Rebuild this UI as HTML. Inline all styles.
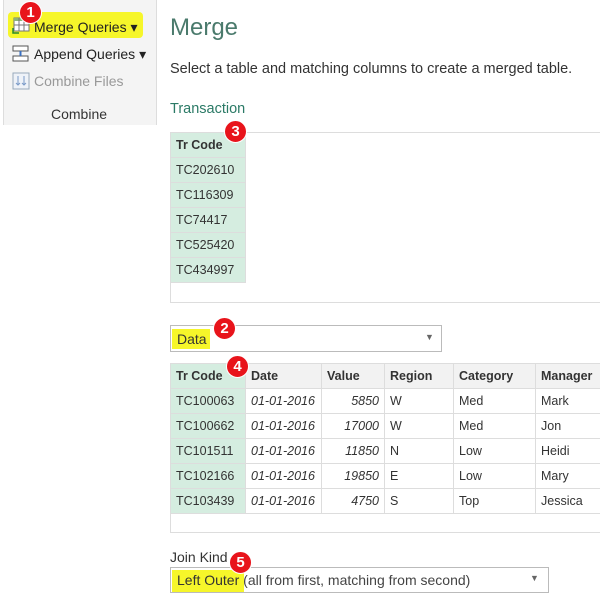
<!DOCTYPE html><html><head><style>
body{margin:0;width:600px;height:602px;background:#fff;font-family:"Liberation Sans",sans-serif;position:relative;overflow:hidden;color:#333}
.a{position:absolute}
.b{position:absolute;width:21px;height:21px;border-radius:50%;background:#e8141b;color:#fff;font-weight:bold;font-size:15px;text-align:center;line-height:21px;border:1px solid #fff}
table{border-collapse:collapse;font-size:12.5px;table-layout:fixed}
td{height:25px;border:1px solid #ddd;padding:0 5px;white-space:nowrap;overflow:hidden;box-sizing:border-box}
.g{background:#d5ede0}
.h td{font-weight:bold;background:#f2f2f2}
.h td.g{background:#d5ede0}
.i{font-style:italic}
.r{text-align:right}
.hl{background:#f6f62a}
</style></head><body>
<div class="a" style="left:3px;top:0;width:152px;height:125px;background:#f4f4f4;border-left:1px solid #ddd;border-right:1px solid #ddd"></div>
<div class="a hl" style="left:8px;top:12px;width:135px;height:26px;border-radius:4px"></div>
<svg class="a" style="left:11px;top:16px" width="20" height="20"><rect x="3" y="2" width="15" height="13" fill="#fff" stroke="#777"/><rect x="3" y="2" width="15" height="3" fill="#8bb37a"/><path d="M3 9h15M8 2v13M13 2v13" stroke="#777"/><path d="M2 12v5h6" stroke="#2a8a2a" fill="none" stroke-width="1.5"/></svg>
<div class="a" style="left:34px;top:19px;font-size:14px;color:#222">Merge Queries ▾</div>
<svg class="a" style="left:11px;top:44px" width="20" height="20"><rect x="2" y="2" width="15" height="5" fill="#fff" stroke="#555"/><rect x="2" y="12" width="15" height="5" fill="#fff" stroke="#555"/><path d="M9.5 7v5" stroke="#3a70c0" stroke-width="2"/></svg>
<div class="a" style="left:34px;top:46px;font-size:14px;color:#222">Append Queries ▾</div>
<svg class="a" style="left:11px;top:71px" width="20" height="20"><rect x="2" y="2" width="16" height="16" fill="#eef2f8" stroke="#9ab"/><path d="M7 5v9M5 12l2 2 2-2M13 5v9M11 12l2 2 2-2" stroke="#7a9ac8" fill="none"/></svg>
<div class="a" style="left:34px;top:73px;font-size:14px;color:#999">Combine Files</div>
<div class="a" style="left:51px;top:106px;font-size:14px;color:#333">Combine</div>
<div class="b" style="left:19px;top:1px">1</div>

<div class="a" style="left:170px;top:14px;font-size:24px;color:#4a7a6c">Merge</div>
<div class="a" style="left:170px;top:61px;font-size:14.5px;color:#333">Select a table and matching columns to create a merged table.</div>
<div class="a" style="left:170px;top:101px;font-size:14.5px;color:#2b7a66">Transaction</div>

<div class="a" style="left:170px;top:132px;width:430px;height:169px;border:1px solid #ddd;border-right:none"></div>
<table class="a" style="left:170px;top:132px;width:75px">
<tr class="h"><td class="g" style="width:75px">Tr Code</td></tr>
<tr><td class="g">TC202610</td></tr><tr><td class="g">TC116309</td></tr><tr><td class="g">TC74417</td></tr><tr><td class="g">TC525420</td></tr><tr><td class="g">TC434997</td></tr>
</table>
<div class="b" style="left:224px;top:120px">3</div>

<div class="a" style="left:170px;top:325px;width:270px;height:25px;border:1px solid #bbb"></div>
<div class="a hl" style="left:172px;top:329px;width:38px;height:20px"></div>
<div class="a" style="left:177px;top:331px;font-size:14px;color:#333">Data</div>
<div class="a" style="left:425px;top:332px;font-size:9px;color:#666">▼</div>
<div class="b" style="left:213px;top:317px">2</div>

<div class="a" style="left:170px;top:363px;width:430px;height:168px;border:1px solid #ddd;border-right:none"></div>
<table class="a" style="left:170px;top:363px;width:440px">
<colgroup><col style="width:75px"><col style="width:76px"><col style="width:63px"><col style="width:69px"><col style="width:82px"><col style="width:75px"></colgroup>
<tr class="h"><td class="g">Tr Code</td><td>Date</td><td>Value</td><td>Region</td><td>Category</td><td>Manager</td></tr>
<tr><td class="g">TC100063</td><td class="i">01-01-2016</td><td class="i r">5850</td><td>W</td><td>Med</td><td>Mark</td></tr>
<tr><td class="g">TC100662</td><td class="i">01-01-2016</td><td class="i r">17000</td><td>W</td><td>Med</td><td>Jon</td></tr>
<tr><td class="g">TC101511</td><td class="i">01-01-2016</td><td class="i r">11850</td><td>N</td><td>Low</td><td>Heidi</td></tr>
<tr><td class="g">TC102166</td><td class="i">01-01-2016</td><td class="i r">19850</td><td>E</td><td>Low</td><td>Mary</td></tr>
<tr><td class="g">TC103439</td><td class="i">01-01-2016</td><td class="i r">4750</td><td>S</td><td>Top</td><td>Jessica</td></tr>
</table>
<div class="b" style="left:226px;top:355px">4</div>

<div class="a" style="left:170px;top:549px;font-size:14px;color:#333">Join Kind</div>
<div class="a" style="left:170px;top:567px;width:377px;height:24px;border:1px solid #bbb"></div>
<div class="a hl" style="left:172px;top:570px;width:72px;height:22px"></div>
<div class="a" style="left:177px;top:572px;font-size:14px;color:#333">Left Outer <span style="color:#444">(all from first, matching from second)</span></div>
<div class="a" style="left:530px;top:573px;font-size:9px;color:#666">▼</div>
<div class="b" style="left:229px;top:551px">5</div>
</body></html>
